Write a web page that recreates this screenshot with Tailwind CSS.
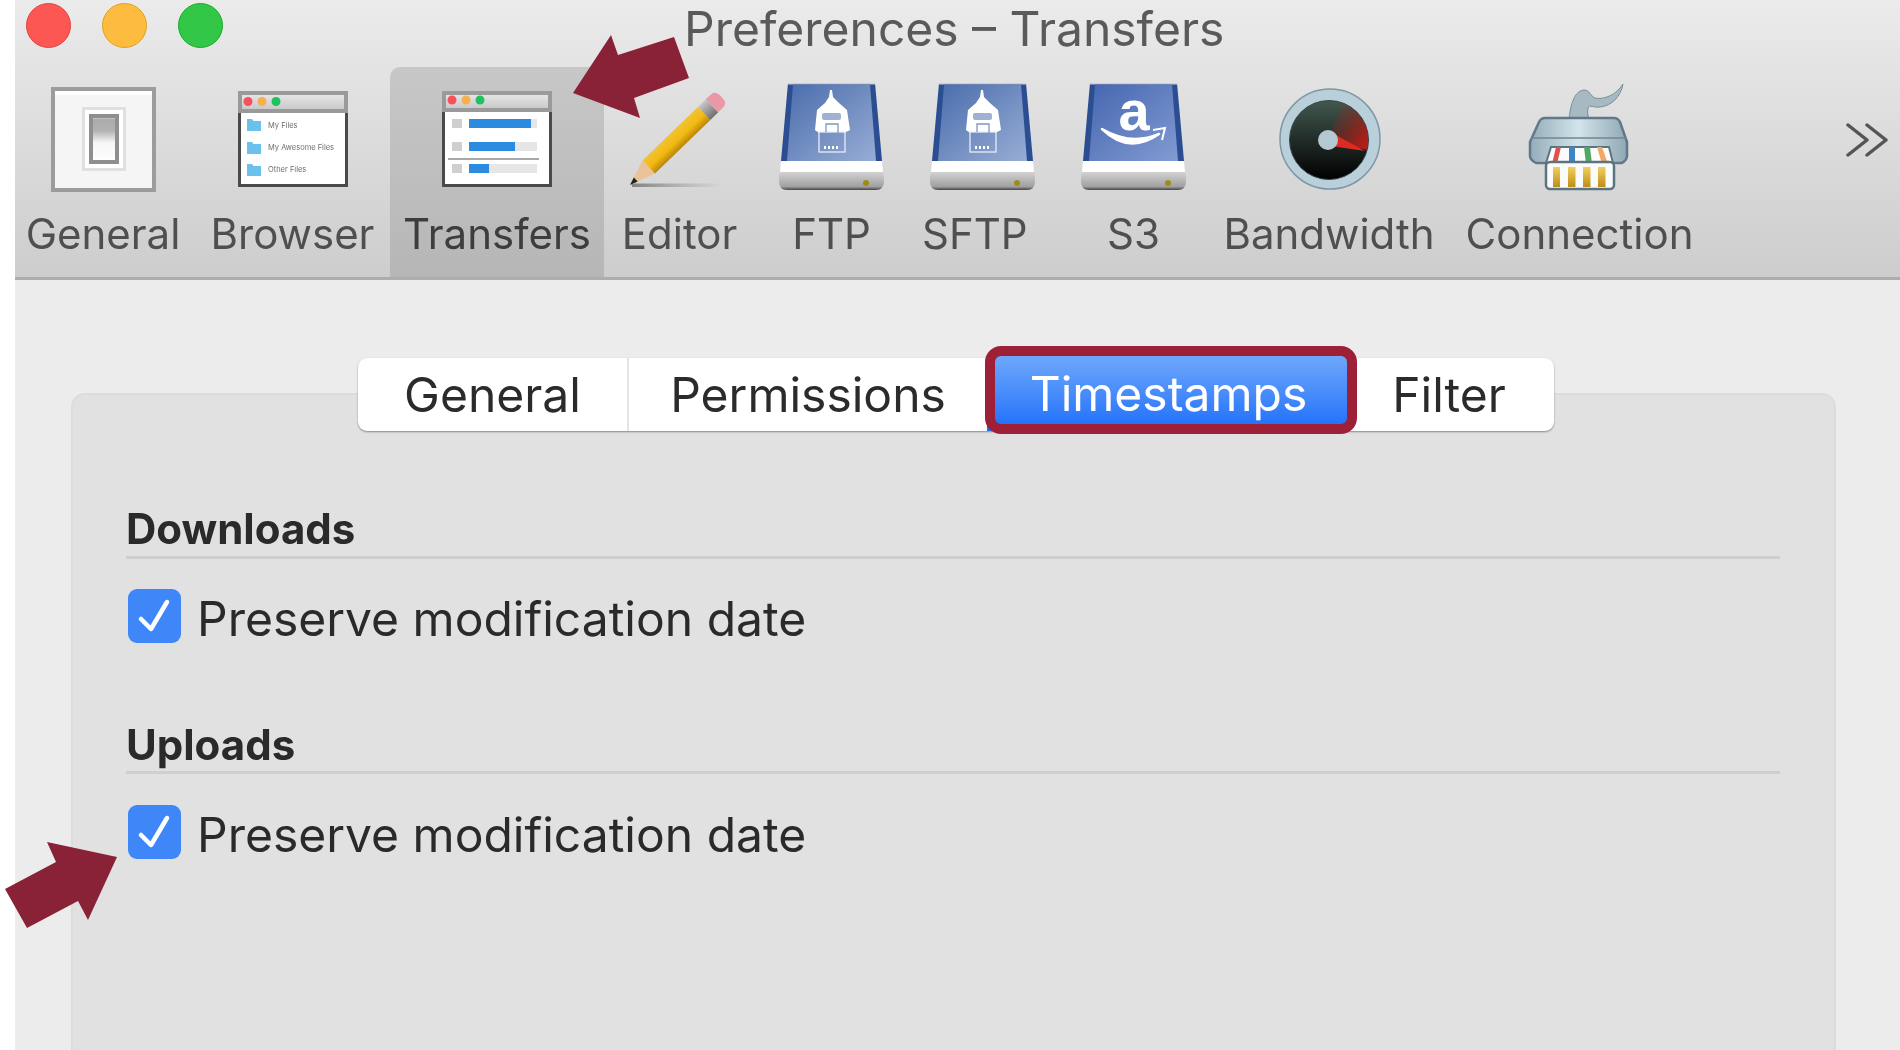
<!DOCTYPE html>
<html>
<head>
<meta charset="utf-8">
<title>Preferences – Transfers</title>
<script src="https://cdn.jsdelivr.net/npm/@tailwindcss/browser@4"></script>
</head>
<body class="bg-white">
<svg width="0" height="0" class="absolute">
  <defs>
    <linearGradient id="driveBlue" x1="0" y1="0" x2="1" y2="1"><stop offset="0" stop-color="#4a6dac"/><stop offset="1" stop-color="#98add5"/></linearGradient>
    <linearGradient id="s3Blue" x1="0" y1="0" x2="1" y2="1"><stop offset="0" stop-color="#4566b0"/><stop offset="1" stop-color="#829bd2"/></linearGradient>
    <linearGradient id="driveBase" x1="0" y1="0" x2="0" y2="1"><stop offset="0" stop-color="#d6d6d6"/><stop offset="0.82" stop-color="#a0a0a0"/><stop offset="1" stop-color="#454545"/></linearGradient>
    <linearGradient id="barGray" x1="0" y1="0" x2="0" y2="1"><stop offset="0" stop-color="#e8e8e8"/><stop offset="1" stop-color="#c6c6c6"/></linearGradient>
    <linearGradient id="toggle" x1="0" y1="0" x2="0" y2="1"><stop offset="0" stop-color="#f2f2f2"/><stop offset="0.08" stop-color="#ababab"/><stop offset="0.32" stop-color="#b2b2b2"/><stop offset="0.58" stop-color="#f6f6f6"/><stop offset="1" stop-color="#ffffff"/></linearGradient>
    <linearGradient id="pencilBody" x1="0" y1="0" x2="0" y2="1"><stop offset="0" stop-color="#f0c33a"/><stop offset="0.55" stop-color="#f2b90f"/><stop offset="1" stop-color="#b9860e"/></linearGradient>
    <linearGradient id="ferrule" x1="0" y1="0" x2="0" y2="1"><stop offset="0" stop-color="#c9c9c9"/><stop offset="1" stop-color="#6f6f6f"/></linearGradient>
    <linearGradient id="shadow" x1="0" y1="0" x2="1" y2="0"><stop offset="0" stop-color="#555" stop-opacity="0.65"/><stop offset="1" stop-color="#777" stop-opacity="0"/></linearGradient>
    <linearGradient id="dial" x1="0" y1="0" x2="0" y2="1"><stop offset="0" stop-color="#42584f"/><stop offset="1" stop-color="#000000"/></linearGradient>
    <linearGradient id="wedge" x1="0.15" y1="0" x2="1" y2="0.7"><stop offset="0" stop-color="#8a2a20" stop-opacity="0"/><stop offset="1" stop-color="#b01e18"/></linearGradient>
    <linearGradient id="hood" x1="0" y1="0" x2="1" y2="0"><stop offset="0" stop-color="#94adb9"/><stop offset="0.5" stop-color="#d3e4ea"/><stop offset="1" stop-color="#8fa8b4"/></linearGradient>
    <linearGradient id="pin" x1="0" y1="0" x2="0" y2="1"><stop offset="0" stop-color="#f0d060"/><stop offset="1" stop-color="#c08d16"/></linearGradient>
    <g id="driveShell">
      <path d="M1 88 L104 88 Q105 92 105 98 Q105 107 97 107 L8 107 Q0 107 0 98 Q0 92 1 88 Z" fill="url(#driveBase)"/>
      <polygon points="2,78 103,78 104,89 1,89" fill="#ffffff"/>
      <polygon points="9,0 96,0 103,78 2,78" fill="#2b4d92"/>
      <rect x="9" y="0" width="87" height="1.5" fill="#cfcfcf"/>
      <circle cx="87" cy="100" r="3" fill="#9d8d16"/>
    </g>
    <g id="rj45">
      <path d="M51 7 L53 7 L54 14 L60 20 L68 27 L71 47 L65 50 L65 49 L40 49 L40 50 L36 47 L38 27 L46 20 L50 14 Z" fill="#ffffff"/>
      <rect x="43" y="30" width="19" height="7" rx="2" fill="#9fb2d4"/>
      <rect x="40" y="49" width="26" height="20" fill="none" stroke="#e8edf6" stroke-width="1.3"/>
      <path d="M47 49 V41 H59 V60" fill="none" stroke="#7f97c3" stroke-width="1.3"/>
      <path d="M46 63 V66 M50 63 V66 M54 63 V66 M58 63 V66" stroke="#ffffff" stroke-width="2"/>
    </g>
  </defs>
</svg>

<div class="relative w-[1900px] h-[1050px] overflow-hidden pl-[15px] font-['Inter','Liberation_Sans',sans-serif]">
  <!-- Toolbar -->
  <header class="h-[280px] bg-gradient-to-b from-[#ebebeb] to-[#cdcdcd] border-b-[3px] border-[#adadad]">
    <div class="h-[67px] flex items-start">
      <div class="flex gap-[31px] ml-[11px] mt-[3px]">
        <span class="w-[45px] h-[45px] rounded-full bg-[#fc5753] border border-[#e0443e]"></span>
        <span class="w-[45px] h-[45px] rounded-full bg-[#fdbc40] border border-[#dea123]"></span>
        <span class="w-[45px] h-[45px] rounded-full bg-[#33c748] border border-[#1aab29]"></span>
      </div>
      <h1 class="ml-[461px] mt-[2px] text-[48px] leading-[54px] font-normal text-[#5a5a5a] whitespace-nowrap blur-[0.5px]">Preferences – Transfers</h1>
    </div>
    <nav class="flex items-start h-[210px] text-[42px] leading-[48px] text-[#4f4f4f]">
      <!-- General -->
      <div class="ml-[13px] w-[150px] h-full flex flex-col items-center pt-[16px]">
        <svg class="blur-[0.5px] shrink-0" width="105" height="110" viewBox="51 83 105 110">
          <rect x="53" y="89" width="101" height="101" fill="#f5f5f5" stroke="#9c9c9c" stroke-width="4"/>
          <rect x="55" y="91" width="97" height="4" fill="#ffffff"/>
          <rect x="83.5" y="108.5" width="41" height="61" fill="#ffffff" stroke="#e0e0e0" stroke-width="3"/>
          <rect x="91" y="116" width="26" height="46" fill="url(#toggle)" stroke="#8f8f8f" stroke-width="4"/>
        </svg>
        <span class="mt-[17px] whitespace-nowrap blur-[0.5px]">General</span>
      </div>
      <!-- Browser -->
      <div class="ml-[35px] w-[159px] h-full flex flex-col items-center pt-[16px]">
        <svg class="blur-[0.6px] shrink-0" width="110" height="110" viewBox="238 83 110 110">
          <rect x="239.5" y="110" width="107" height="75.5" fill="#ffffff" stroke="#4a4a4a" stroke-width="3"/>
          <rect x="240" y="93" width="106" height="18" fill="url(#barGray)" stroke="#9a9a9a" stroke-width="4"/>
          <circle cx="248" cy="101.500" r="4.5" fill="#fb4f5c"/><circle cx="262" cy="101.500" r="4.500" fill="#f9b04c"/><circle cx="276" cy="101.500" r="4.500" fill="#1fc25f"/>
          <path d="M247 119 h5 l1.500 2 h7.500 v10 h-14 Z" fill="#6cc1ec"/>
          <path d="M247 142 h5 l1.500 2 h7.500 v10 h-14 Z" fill="#6cc1ec"/>
          <path d="M247 164 h5 l1.500 2 h7.500 v10 h-14 Z" fill="#6cc1ec"/>
          <g fill="#6e6e6e" font-size="7.500" font-family="Inter, sans-serif">
            <text x="268" y="128">My Files</text>
            <text x="268" y="150">My Awesome Files</text>
            <text x="268" y="172">Other Files</text>
          </g>
        </svg>
        <span class="mt-[17px] whitespace-nowrap blur-[0.5px]">Browser</span>
      </div>
      <!-- Transfers -->
      <div class="ml-[18px] w-[214px] h-full flex flex-col items-center pt-[16px] rounded-t-[10px] bg-gradient-to-b from-[#c7c7c7] to-[#b6b6b6] text-[#3d3d3d]">
        <svg class="blur-[0.5px] shrink-0" width="110" height="110" viewBox="442 83 110 110">
          <rect x="443.500" y="110" width="107" height="75.500" fill="#ffffff" stroke="#4a4a4a" stroke-width="3"/>
          <rect x="444" y="93" width="106" height="17" fill="url(#barGray)" stroke="#9a9a9a" stroke-width="4"/>
          <circle cx="452" cy="100" r="4.500" fill="#fb4f5c"/><circle cx="466" cy="100" r="4.500" fill="#f9b04c"/><circle cx="480" cy="100" r="4.500" fill="#1fc25f"/>
          <rect x="452" y="119" width="10" height="9" fill="#cfcfcf"/><rect x="469" y="119" width="68" height="9" fill="#e6e6e6"/><rect x="469" y="119" width="62" height="9" fill="#2a8be0"/>
          <rect x="452" y="142" width="10" height="9" fill="#cfcfcf"/><rect x="469" y="142" width="68" height="9" fill="#e6e6e6"/><rect x="469" y="142" width="46" height="9" fill="#2a8be0"/>
          <rect x="448" y="158" width="91" height="2" fill="#a8a8a8"/>
          <rect x="452" y="164" width="10" height="9" fill="#cfcfcf"/><rect x="469" y="164" width="68" height="9" fill="#e6e6e6"/><rect x="469" y="164" width="20" height="9" fill="#2a8be0"/>
        </svg>
        <span class="mt-[17px] whitespace-nowrap blur-[0.5px]">Transfers</span>
      </div>
      <!-- Editor -->
      <div class="ml-[18px] w-[115px] h-full flex flex-col items-center pt-[16px]">
        <svg class="blur-[0.5px] shrink-0" width="115" height="110" viewBox="622 83 115 110">
          <rect x="632" y="183.500" width="90" height="3.500" fill="url(#shadow)"/>
          <g transform="translate(630 185) rotate(-44)">
            <polygon points="0,0 26,-9 26,9" fill="#eac39b"/>
            <polygon points="0,0 8,-2.800 8,2.800" fill="#222222"/>
            <rect x="26" y="-9" width="77" height="18" fill="url(#pencilBody)"/>
            <rect x="103" y="-9" width="11" height="18" fill="url(#ferrule)"/>
            <path d="M114 -9 H120 Q127 -9 127 -2 V2 Q127 9 120 9 H114 Z" fill="#eb98a6"/>
          </g>
        </svg>
        <span class="mt-[17px] whitespace-nowrap blur-[0.5px]">Editor</span>
      </div>
      <!-- FTP -->
      <div class="ml-[42px] w-[105px] h-full flex flex-col items-center pt-[16px]">
        <svg class="blur-[0.5px] shrink-0" width="105" height="110" viewBox="0 0 105 110">
          <use href="#driveShell"/>
          <polygon points="14,1.500 91,1.500 97,78 8,78" fill="url(#driveBlue)"/>
          <use href="#rj45"/>
        </svg>
        <span class="mt-[17px] whitespace-nowrap blur-[0.5px]">FTP</span>
      </div>
      <!-- SFTP -->
      <div class="ml-[38px] w-[113px] h-full flex flex-col pt-[16px]">
        <svg class="blur-[0.5px] shrink-0 self-end" width="105" height="110" viewBox="0 0 105 110">
          <use href="#driveShell"/>
          <polygon points="14,1.500 91,1.500 97,78 8,78" fill="url(#driveBlue)"/>
          <use href="#rj45"/>
        </svg>
        <span class="mt-[17px] whitespace-nowrap blur-[0.5px]">SFTP</span>
      </div>
      <!-- S3 -->
      <div class="ml-[46px] w-[105px] h-full flex flex-col items-center pt-[16px]">
        <svg class="blur-[0.5px] shrink-0 overflow-visible" width="105" height="110" viewBox="0 0 105 110">
          <use href="#driveShell"/>
          <polygon points="14,1.500 91,1.500 97,78 8,78" fill="url(#s3Blue)"/>
          <text x="53" y="47" text-anchor="middle" font-size="56" font-weight="700" font-family="'Liberation Sans', sans-serif" fill="#ffffff">a</text>
          <path d="M21 46 Q48 72 78 51 Q50 63 21 46 Z" fill="#ffffff" stroke="#ffffff" stroke-width="2.500" stroke-linejoin="round"/>
          <path d="M72 47 L84 45 L81 57" fill="none" stroke="#ffffff" stroke-width="2"/>
        </svg>
        <span class="mt-[17px] whitespace-nowrap blur-[0.5px]">S3</span>
      </div>
      <!-- Bandwidth -->
      <div class="ml-[39px] w-[208px] h-full flex flex-col items-center pt-[16px]">
        <svg class="blur-[0.5px] shrink-0" width="208" height="110" viewBox="1225 83 208 110">
          <circle cx="1330" cy="139" r="50" fill="#b9d0da" stroke="#7e97a3" stroke-width="1.500"/>
          <circle cx="1329" cy="140" r="39.500" fill="url(#dial)" stroke="#33464a" stroke-width="1"/>
          <path d="M1329 140 L1341 103 A39 39 0 0 1 1367 150 Z" fill="url(#wedge)"/>
          <polygon points="1334,134 1365,151 1331,146" fill="#dd2a22"/>
          <circle cx="1328" cy="140" r="10" fill="#b4c8d2"/>
        </svg>
        <span class="mt-[17px] whitespace-nowrap blur-[0.5px]">Bandwidth</span>
      </div>
      <!-- Connection -->
      <div class="ml-[35px] w-[223px] h-full flex flex-col items-center pt-[16px]">
        <svg class="blur-[0.5px] shrink-0" width="223" height="110" viewBox="1468 83 223 110">
          <path d="M1569 119 C1571 102 1575 91 1584 90 C1590 90 1590 96 1595 98 C1604 100 1616 95 1623 84 C1621 96 1612 106 1600 107 C1594 108 1589 104 1588 108 C1587 112 1588 116 1589 119 Z" fill="#a7b9c1" stroke="#76909c" stroke-width="1"/>
          <path d="M1545 118 H1614 Q1618 118 1620 122 L1627 142 V156 Q1627 160 1622 163 H1536 Q1530 160 1530 156 V142 L1539 122 Q1541 118 1545 118 Z" fill="url(#hood)" stroke="#61788a" stroke-width="2.500"/>
          <path d="M1531 138 H1626" stroke="#6f8792" stroke-width="1.500"/>
          <polygon points="1551,147 1609,147 1613,163 1546,163" fill="#fbfbfb" stroke="#5b7480" stroke-width="2"/>
          <polygon points="1556,147 1561,147 1557,164 1552,164" fill="#e0504f"/>
          <polygon points="1569,147 1575,147 1575,164 1569,164" fill="#3b85c8"/>
          <polygon points="1584,147 1590,147 1592,164 1586,164" fill="#50a860"/>
          <polygon points="1597,147 1602,147 1608,164 1602,164" fill="#f2a765"/>
          <rect x="1546" y="162" width="68" height="27" rx="4" fill="#fbfbfb" stroke="#5b7480" stroke-width="2.500"/>
          <rect x="1553" y="167" width="7" height="20" fill="url(#pin)"/>
          <rect x="1568" y="167" width="7.500" height="20" fill="url(#pin)"/>
          <rect x="1583" y="167" width="7.500" height="20" fill="url(#pin)"/>
          <rect x="1598" y="167" width="7.500" height="20" fill="url(#pin)"/>
        </svg>
        <span class="mt-[17px] whitespace-nowrap blur-[0.5px]">Connection</span>
      </div>
      <!-- More -->
      <svg class="ml-[155px] mt-[56px] blur-[0.4px]" width="42" height="34" viewBox="0 0 42 34" fill="none" stroke="#555555" stroke-width="3.500" stroke-linecap="round" stroke-linejoin="round">
        <path d="M2 2 L21 17 L2 32"/><path d="M21 2 L40 17 L21 32"/>
      </svg>
    </nav>
  </header>

  <!-- Content -->
  <main class="h-[770px] bg-[#ececec] pt-[78px]">
    <div class="relative z-10 ml-[343px] w-[1196px] h-[73px] flex rounded-[9px] bg-white shadow-[0_1px_2px_rgba(0,0,0,0.4)] text-[48px] leading-[73px] text-[#2b2b2b]">
      <div class="w-[271px] text-center border-r-[2px] border-[#e4e4e4] blur-[0.4px]">General</div>
      <div class="w-[358px] text-center blur-[0.4px]">Permissions</div>
      <div class="relative w-[363px] h-[75px] -mt-[2px] leading-[75px] text-center bg-gradient-to-b from-[#6ea7fb] to-[#1a6dfb] text-white">
        <span class="blur-[0.4px] block">Timestamps</span>
        <div class="absolute -left-[2px] -right-[7px] -top-[10px] -bottom-[3px] border-[10px] border-[#9e2037] rounded-[16px]"></div>
      </div>
      <div class="w-[204px] text-center pr-[6px] blur-[0.4px]">Filter</div>
    </div>
    <section class="ml-[56px] mr-[64px] -mt-[38px] h-[660px] rounded-t-[14px] bg-[#e1e1e1] border-2 border-b-0 border-[#dcdcdc] pt-[110px] pl-[53px] pr-[54px] text-[#2a2a2a]">
      <h2 class="text-[42px] leading-[48px] font-bold blur-[0.4px]">Downloads</h2>
      <div class="mt-[3px] h-[3px] bg-[#cfcfcf]"></div>
      <label class="mt-[30px] ml-[2px] flex items-start gap-[16px]">
        <span class="w-[53px] h-[54px] rounded-[9px] bg-[#3f87f8] flex items-center justify-center">
          <svg width="53" height="54" viewBox="0 0 53 54" fill="none" stroke="#ffffff" stroke-width="4.500" stroke-linecap="round" stroke-linejoin="round"><path d="M13 30 L23 40 L39 13"/></svg>
        </span>
        <span class="text-[48px] h-[54px] leading-[60px] whitespace-nowrap blur-[0.4px]">Preserve modification date</span>
      </label>
      <h2 class="mt-[78px] text-[42px] leading-[48px] font-bold blur-[0.4px]">Uploads</h2>
      <div class="mt-[2px] h-[3px] bg-[#cfcfcf]"></div>
      <label class="mt-[31px] ml-[2px] flex items-start gap-[16px]">
        <span class="w-[53px] h-[54px] rounded-[9px] bg-[#3f87f8] flex items-center justify-center">
          <svg width="53" height="54" viewBox="0 0 53 54" fill="none" stroke="#ffffff" stroke-width="4.500" stroke-linecap="round" stroke-linejoin="round"><path d="M13 30 L23 40 L39 13"/></svg>
        </span>
        <span class="text-[48px] h-[54px] leading-[60px] whitespace-nowrap blur-[0.4px]">Preserve modification date</span>
      </label>
    </section>
  </main>

  <!-- Annotation arrows -->
  <svg class="absolute left-[573px] top-[35px] z-20" width="116" height="83" viewBox="573 35 116 83">
    <polygon points="573,93 611,35 618,55 674,37 689,78 634,98 640,118" fill="#8a2237"/>
  </svg>
  <svg class="absolute left-[5px] top-[842px] z-20" width="112" height="86" viewBox="5 842 112 86">
    <polygon points="47,842 117,857 88,920 78,901 27,928 5,889 56,862" fill="#8a2237"/>
  </svg>
</div>
</body>
</html>
